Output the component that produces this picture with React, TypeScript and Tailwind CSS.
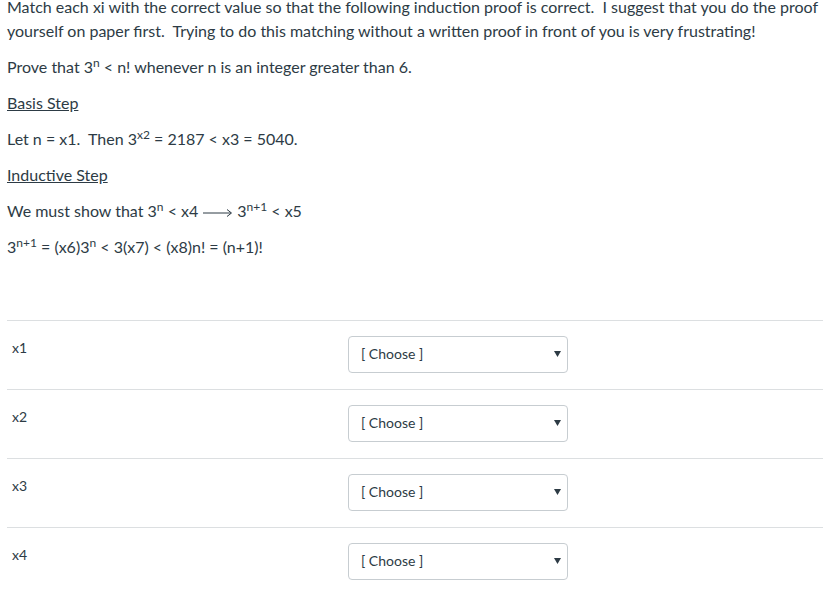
import React from "react";

const Arrow = () => (
  <svg width="30" height="10" viewBox="0 0 30 10" className="inline-block ml-[5px] mr-[4px]" style={{ verticalAlign: "-1px" }}>
    <line x1="0" y1="5" x2="28" y2="5" stroke="#2d3b45" strokeWidth="1" />
    <path d="M24 1.5 L28.5 5 L24 8.5" fill="none" stroke="#2d3b45" strokeWidth="1" />
  </svg>
);

const Row = ({ label }: { label: string }) => (
  <div className="flex border-t border-[#dcdfe1] pt-[15px] pb-[16px]">
    <div className="w-[341px] pl-[5px] pt-[2px] text-[14px] leading-[20px]">{label}</div>
    <div className="w-[220px] h-[37px] border border-[#c7cdd1] rounded-[4px] bg-white flex items-center justify-between pl-[12px] pr-[6px]">
      <span className="text-[14px] -mt-[1px]">[ Choose ]</span>
      <svg width="7" height="6" viewBox="0 0 7 6" className="-mt-[2px]">
        <path d="M0 0 L7 0 L3.5 6 Z" fill="#2d3b45" />
      </svg>
    </div>
  </div>
);

export default function App() {
  return (
    <div
      className="bg-white w-[823px] h-[594px] overflow-hidden pl-[7px] text-[#2d3b45] text-[16px] leading-[24px]"
      style={{ fontFamily: "Lato, 'Liberation Sans', sans-serif" }}
    >
      <div className="-mt-[5px]">
        <p className="mb-[12px] whitespace-nowrap">
          Match each xi with the correct value so that the following induction proof is correct.&nbsp; I suggest that you do the proof
          <br />
          yourself on paper first.&nbsp; Trying to do this matching without a written proof in front of you is very frustrating!
        </p>
        <p className="my-[12px]">
          Prove that 3<sup>n</sup> &lt; n! whenever n is an integer greater than 6.
        </p>
        <p className="my-[12px]">
          <span className="underline">Basis Step</span>
        </p>
        <p className="my-[12px]">
          Let n = x1.&nbsp; Then 3<sup>x2</sup> = 2187 &lt; x3 = 5040.
        </p>
        <p className="my-[12px]">
          <span className="underline">Inductive Step</span>
        </p>
        <p className="my-[12px]">
          We must show that 3<sup>n</sup> &lt; x4
          <Arrow />
          3<sup>n+1</sup> &lt; x5
        </p>
        <p className="mt-[12px]">
          3<sup>n+1</sup> = (x6)3<sup>n</sup> &lt; 3(x7) &lt; (x8)n! = (n+1)!
        </p>
        <div className="mt-[61px]">
          <Row label="x1" />
          <Row label="x2" />
          <Row label="x3" />
          <Row label="x4" />
        </div>
      </div>
    </div>
  );
}
